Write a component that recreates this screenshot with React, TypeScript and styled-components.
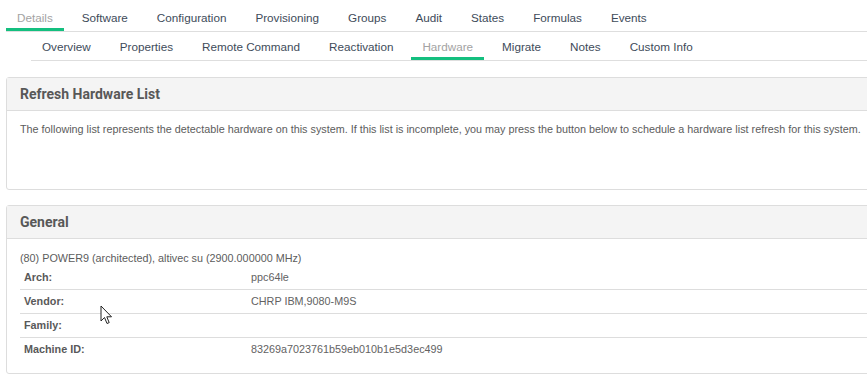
import React from 'react'
import styled, { createGlobalStyle } from 'styled-components'

const GlobalStyle = createGlobalStyle`
    html, body {
        margin: 0;
        padding: 0;
        background: #fff;
        overflow: hidden;
    }
    body {
        font-family: "Liberation Sans", Arial, sans-serif;
        color: #555;
    }
`

const Page = styled.div`
    position: relative;
    width: 900px;
    padding-left: 6px;
`

const Nav = styled.ul<{ $sub?: boolean }>`
    display: flex;
    gap: 7px;
    list-style: none;
    margin: 0 0 0 ${p => p.$sub ? '25px' : '0'};
    padding: 0;
    border-bottom: 1px solid #dedede;
`

const Tab = styled.li<{ $active?: boolean; $sub?: boolean }>`
    padding: ${p => p.$sub ? '8px' : '11px'} 11px 3px;
    font-size: 11.7px;
    line-height: 14px;
    white-space: nowrap;
    color: ${p => p.$active ? '#a3a3a3' : '#3e4b5a'};
    border-bottom: 3px solid ${p => p.$active ? '#14bf7f' : 'transparent'};
    cursor: pointer;
`

const Panel = styled.section<{ $first?: boolean }>`
    margin-top: ${p => p.$first ? '16px' : '15px'};
    border: 1px solid #dddddd;
    border-radius: 3px;
    background: #fff;
`

const PanelHeading = styled.h3`
    margin: 0;
    padding: 0 13px;
    height: 32px;
    line-height: 32px;
    background: #f4f4f4;
    border-bottom: 1px solid #dddddd;
    font-family: Roboto, "Liberation Sans", Arial, sans-serif;
    font-weight: 700;
    font-size: 14px;
    color: #585858;
`

const PanelBody = styled.div<{ $tall?: boolean }>`
    padding: ${p => p.$tall ? '11px 13px 53px' : '12px 13px 12px'};
    font-size: 10.8px;
    line-height: 14px;
    color: #5c5c5c;
`

const Text = styled.p`
    margin: 0;
    white-space: nowrap;
`

const Table = styled.table`
    width: 100%;
    border-collapse: collapse;
    font-size: 10.8px;
`

const Row = styled.tr<{ $first?: boolean }>`
    & > td {
        border-top: 1px solid ${p => p.$first ? 'transparent' : '#dddddd'};
        padding: 5px 4px;
        line-height: 13px;
        height: 13px;
    }
`

const Label = styled.td`
    width: 219px;
    font-weight: 700;
    color: #595959;
`

const Value = styled.td`
    color: #626262;
`

const Cursor = styled.svg`
    position: absolute;
    left: 100px;
    top: 305px;
    width: 13px;
    height: 20px;
    pointer-events: none;
`

const mainTabs = ['Details', 'Software', 'Configuration', 'Provisioning', 'Groups', 'Audit', 'States', 'Formulas', 'Events']
const subTabs = ['Overview', 'Properties', 'Remote Command', 'Reactivation', 'Hardware', 'Migrate', 'Notes', 'Custom Info']

const rows: [string, string][] = [
    ['Arch:', 'ppc64le'],
    ['Vendor:', 'CHRP IBM,9080-M9S'],
    ['Family:', ''],
    ['Machine ID:', '83269a7023761b59eb010b1e5d3ec499'],
]

const App: React.FC = () => {
    return <Page>
        <GlobalStyle />
        <Nav>
            {mainTabs.map(t => <Tab key={t} $active={t === 'Details'}>{t}</Tab>)}
        </Nav>
        <Nav $sub>
            {subTabs.map(t => <Tab key={t} $sub $active={t === 'Hardware'}>{t}</Tab>)}
        </Nav>

        <Panel $first>
            <PanelHeading>Refresh Hardware List</PanelHeading>
            <PanelBody $tall>
                <Text>The following list represents the detectable hardware on this system. If this list is incomplete, you may press the button below to schedule a hardware list refresh for this system.</Text>
            </PanelBody>
        </Panel>

        <Panel>
            <PanelHeading>General</PanelHeading>
            <PanelBody>
                <Text>(80) POWER9 (architected), altivec su (2900.000000 MHz)</Text>
                <Table>
                    <tbody>
                        {rows.map(([k, v], i) => <Row key={k} $first={i === 0}>
                            <Label>{k}</Label>
                            <Value>{v}</Value>
                        </Row>)}
                    </tbody>
                </Table>
            </PanelBody>
        </Panel>

        <Cursor viewBox="0 0 13 20">
            <path d="M1 1 L1 16 L4.5 12.5 L7 18.5 L9.2 17.6 L6.8 11.8 L11.5 11.8 Z" fill="#fff" stroke="#222" strokeWidth="1" strokeLinejoin="round" />
        </Cursor>
    </Page>
}

export default App
